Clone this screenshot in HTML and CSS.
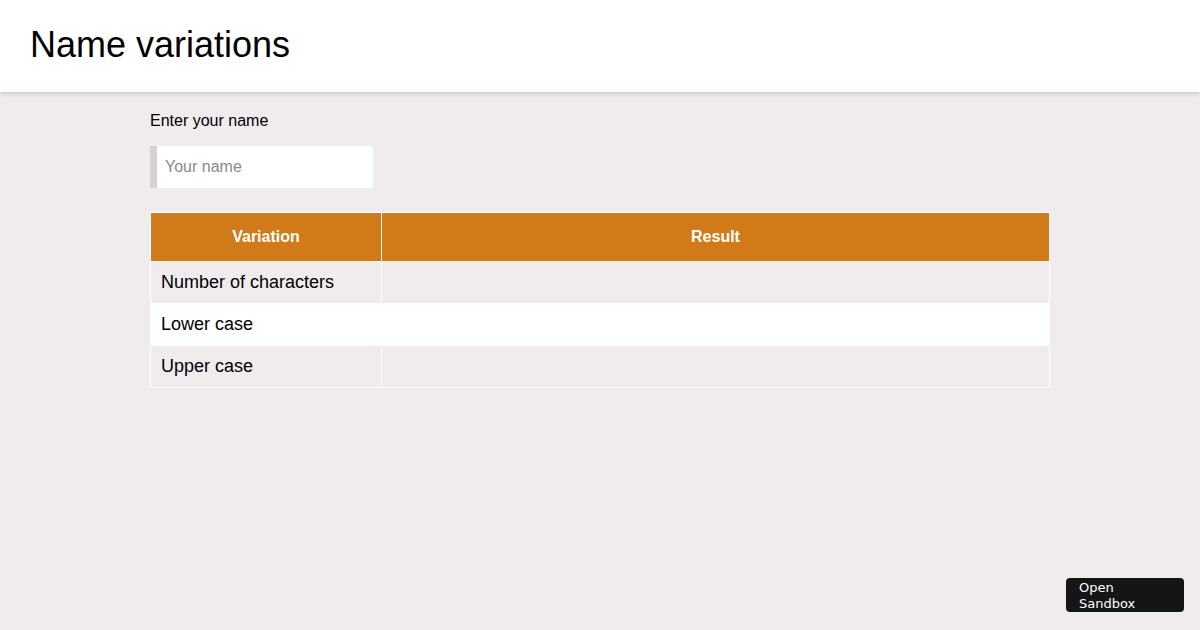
FILE: index.html
```html
<!DOCTYPE html>
<html>
<head>
<meta charset="utf-8">
<link rel="stylesheet" href="styles.css">
</head>
<body>
<header class="top">
  <h1 class="title">Name variations</h1>
</header>
<main class="content">
  <label class="label" for="name">Enter your name</label>
  <input id="name" class="name-input" type="text" placeholder="Your name">
  <table class="table">
    <thead>
      <tr><th class="col-var">Variation</th><th>Result</th></tr>
    </thead>
    <tbody>
      <tr class="odd"><td>Number of characters</td><td></td></tr>
      <tr class="even"><td>Lower case</td><td></td></tr>
      <tr class="odd"><td>Upper case</td><td></td></tr>
    </tbody>
  </table>
</main>
<a class="sandbox" href="#">Open Sandbox</a>
</body>
</html>
```

FILE: styles.css
```css
html, body {
  margin: 0;
  padding: 0;
}
body {
  background: #f0ebed;
  font-family: "Liberation Sans", Arial, sans-serif;
  width: 1200px;
  height: 630px;
  overflow: hidden;
  position: relative;
}
.top {
  background: #ffffff;
  height: 92px;
  box-shadow: 0 2px 4px rgba(120, 100, 105, 0.25);
  display: flex;
  align-items: center;
  padding-left: 30px;
}
.title {
  margin: 0;
  font-weight: normal;
  font-size: 36px;
  color: #000;
  position: relative;
  top: -1px;
}
.content {
  width: 900px;
  margin: 0 auto;
  padding-top: 19px;
  display: flex;
  flex-direction: column;
  align-items: flex-start;
}
.label {
  font-size: 16px;
  color: #000;
  line-height: 20px;
}
.name-input {
  margin-top: 15px;
  width: 223px;
  height: 42px;
  box-sizing: border-box;
  border: none;
  border-left: 7px solid #d7d1d3;
  background: #fff;
  padding: 0 0 0 8px;
  font-family: "Liberation Sans", Arial, sans-serif;
  font-size: 16px;
  outline: none;
}
.name-input::placeholder {
  color: #8a8a8a;
}
.table {
  margin-top: 24px;
  width: 900px;
  border-collapse: collapse;
  border: 1px solid #fff;
}
.table th {
  background: #d17a1a;
  color: #fff;
  font-weight: bold;
  font-size: 16px;
  height: 48px;
  padding: 0;
  border: 1px solid #fff;
}
.table .col-var {
  width: 230px;
}
.table td {
  font-size: 18px;
  height: 41px;
  padding: 0 10px;
  border: 1px solid #fff;
  color: #000;
}
.odd {
  background: #f0ebed;
}
.even {
  background: #ffffff;
}
.sandbox {
  position: absolute;
  left: 1066px;
  top: 578px;
  width: 118px;
  height: 34px;
  box-sizing: border-box;
  background: #151515;
  color: #fff;
  border-radius: 4px;
  font-family: "DejaVu Sans", sans-serif;
  font-size: 13px;
  line-height: 16px;
  padding: 2px 40px 0 13px;
  text-decoration: none;
}
```
